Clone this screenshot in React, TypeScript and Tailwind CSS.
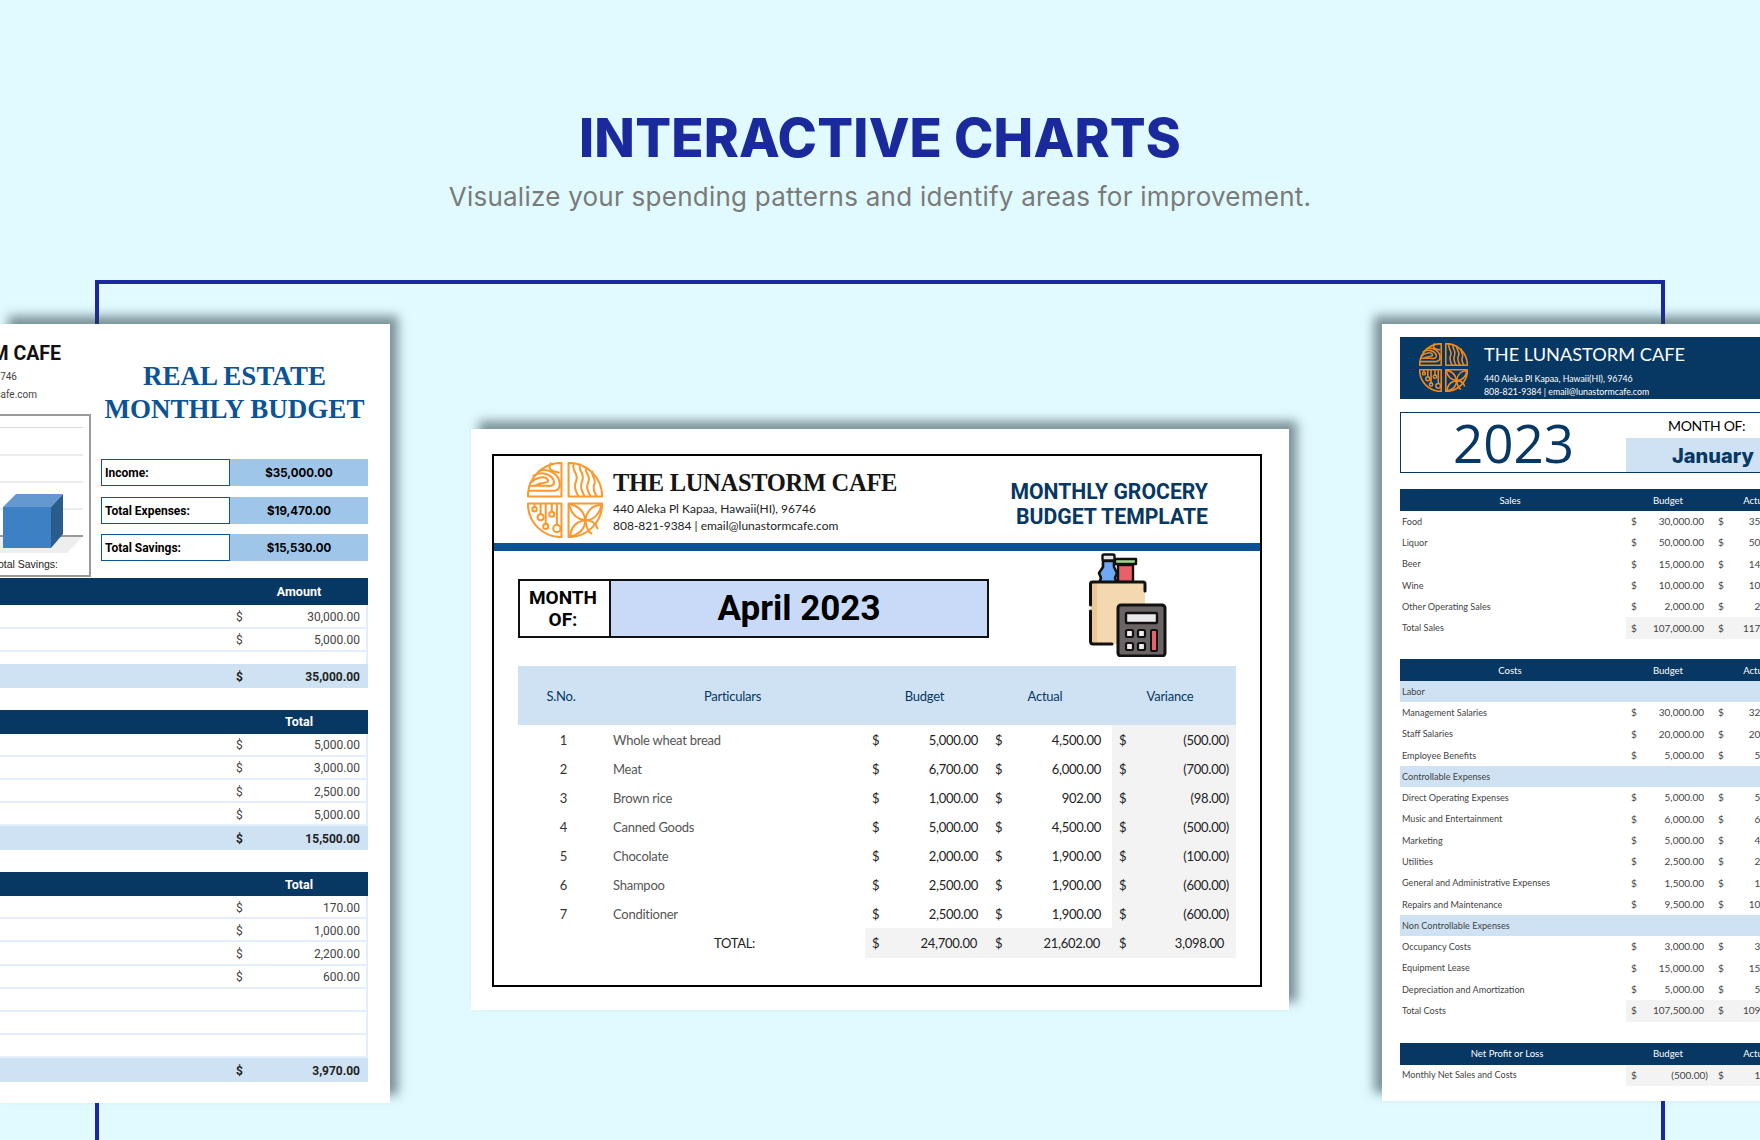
import React from "react";

function Logo({ color, className, sw }: { color: string; className: string; sw: string }) {
  return (
    <svg viewBox="0.6 0.6 74.8 74.8" className={className} fill="none" stroke={color} strokeWidth={sw} strokeLinecap="round" strokeLinejoin="round">
      <path d="M34.5 1.5 L34.5 34.5 L1.5 34.5 C1.5 16 16 1.5 34.5 1.5 Z" />
      <path d="M41.5 1.5 C60 1.5 74.5 16 74.5 34.5 L41.5 34.5 Z" />
      <path d="M1.5 41.5 L34.5 41.5 L34.5 74.5 C16 74.5 1.5 60 1.5 41.5 Z" />
      <path d="M41.5 41.5 L74.5 41.5 C74.5 60 60 74.5 41.5 74.5 Z" />
      <path d="M13 9 C22 7 30 12 32 18 C34 25 32 29 26 29 L3 29" />
      <path d="M7 14 C15 9 25 13 27 19 C28 23 25 25 20 24 L3 24" />
      <path d="M4 21 C10 15 19 14 21 18 C23 22 14 20 8 24" />
      <path d="M24 2 C20 8 26 10 32 11" />
      <path d="M47 2 C43 8 52 12 49 19 C46 25 49 30 51 34" />
      <path d="M53 3 C50 8 58 12 55 19 C52 25 55 30 57 34" />
      <path d="M59 6 C56 10 64 14 61 20 C58 26 61 30 63 34" />
      <path d="M65 10 C63 13 69 17 67 22 C65 27 67 31 69 34" />
      <path d="M8 42 L8 45" /><circle cx="8" cy="47" r="2.2" />
      <path d="M14 42 L14 52" /><circle cx="14" cy="55" r="3" />
      <path d="M19 42 L19 61" /><circle cx="19" cy="64" r="2.5" />
      <path d="M25 42 L25 49" /><circle cx="25" cy="52" r="2.5" />
      <path d="M30 42 L30 62" /><circle cx="30" cy="66" r="3.6" />
      <path d="M42 42 C44 52 50 57 58 58 C57 50 52 44 42 42 Z" />
      <path d="M74 43 C64 43 59 50 58 58 C66 58 72 52 74 43 Z" />
      <path d="M43 74 C44 64 50 59 58 58 C58 66 52 72 43 74 Z" />
      <path d="M70 66 C68 60 64 58 58 58 C59 64 61 70 64 71" />
    </svg>
  );
}

function Grocery({ className }: { className: string }) {
  return (
    <svg viewBox="0 0 78 104" className={className}>
      <path d="M14 8 H25 V14 L28 20 L26 25 L28 30 H10 L12 25 L10 20 L14 14 Z" fill="#6fa8f5" stroke="#111" strokeWidth="2.6" strokeLinejoin="round" />
      <rect x="13.5" y="1.5" width="12" height="6" rx="1.5" fill="#e8e6e8" stroke="#111" strokeWidth="2.4" />
      <rect x="29" y="12" width="15" height="17" fill="#e8606a" stroke="#111" strokeWidth="2.4" />
      <path d="M26 6 H47 V11 H26 Z" fill="#a5d98a" stroke="#111" strokeWidth="2.4" strokeLinejoin="round" />
      <rect x="2" y="29" width="54" height="62" rx="2" fill="#f3d8b0" />
      <rect x="2" y="29" width="6" height="62" fill="#ecc796" />
      <path d="M1.5 52 V31 Q1.5 29 3.5 29 H54 Q56 29 56 31 V38 M1.5 58 V88 Q1.5 91 4 91 H23" fill="none" stroke="#111" strokeWidth="3" strokeLinecap="round" />
      <rect x="29" y="52" width="47" height="51" rx="3" fill="#6b6464" stroke="#111" strokeWidth="3" />
      <rect x="37" y="60" width="31" height="10" rx="1" fill="#e9e7ea" stroke="#111" strokeWidth="2.4" />
      {[[37, 77], [49, 77], [37, 90], [49, 90]].map(([x, y]) => (
        <rect key={`${x}-${y}`} x={x} y={y} width="7" height="7" rx="1.5" fill="#f0eef0" stroke="#111" strokeWidth="2.2" />
      ))}
      <rect x="62" y="77" width="6" height="21" rx="1" fill="#e8606a" stroke="#111" strokeWidth="2" />
    </svg>
  );
}

function LeftSection({ head, rows, total, mt }: { head: string; rows: (string | null)[]; total: string; mt: string }) {
  return (
    <div className={`${mt} w-[368px] font-['Roboto',sans-serif] text-[12px] text-[#444]`}>
      <div className="h-[23.6px] pt-[2px] bg-[#073763] text-white text-[12.5px] font-bold grid grid-cols-[230px_138px] items-center">
        <span />
        <span className="text-center">{head}</span>
      </div>
      {rows.map((r, i) => (
        <div key={i} className="h-[23.2px] pt-[2px] border-b-2 border-r-2 border-[#e3eefa] grid grid-cols-[230px_136px] items-center">
          <span />
          {r && (
            <span className="flex justify-between px-[6px]">
              <span>$</span>
              <span>{r}</span>
            </span>
          )}
        </div>
      ))}
      <div className="h-[24px] pt-[2px] bg-[#cfe2f3] grid grid-cols-[230px_138px] items-center font-bold text-[#222]">
        <span />
        <span className="flex justify-between pl-[6px] pr-[8px]">
          <span>$</span>
          <span>{total}</span>
        </span>
      </div>
    </div>
  );
}

function Summary({ label, value, mt }: { label: string; value: string; mt: string }) {
  return (
    <div className={`${mt} h-[27px] grid grid-cols-[129px_138px] font-['Roboto',sans-serif] text-[12px] font-bold text-black`}>
      <div className="border-[1.5px] border-[#0b5394] bg-white pl-[3px] flex items-center">{label}</div>
      <div className="bg-[#9fc5e8] pt-[2px] flex items-center justify-center font-['Inter',sans-serif] text-[11.5px]">{value}</div>
    </div>
  );
}

const grocery = [
  ["1", "Whole wheat bread", "5,000.00", "4,500.00", "(500.00)"],
  ["2", "Meat", "6,700.00", "6,000.00", "(700.00)"],
  ["3", "Brown rice", "1,000.00", "902.00", "(98.00)"],
  ["4", "Canned Goods", "5,000.00", "4,500.00", "(500.00)"],
  ["5", "Chocolate", "2,000.00", "1,900.00", "(100.00)"],
  ["6", "Shampoo", "2,500.00", "1,900.00", "(600.00)"],
  ["7", "Conditioner", "2,500.00", "1,900.00", "(600.00)"],
];

const groceryCols = "grid grid-cols-[86px_261px_123px_124px_124px]";

function Money({ v, pr, className = "" }: { v: string; pr: string; className?: string }) {
  return (
    <span className={`flex justify-between pl-[7px] pt-[2px] ${pr} ${className}`}>
      <span>$</span>
      <span>{v}</span>
    </span>
  );
}

type RRow = { label: string; kind?: "band" | "total"; b?: string; a?: string };

const sales: RRow[] = [
  { label: "Food", b: "30,000.00", a: "35,000.00" },
  { label: "Liquor", b: "50,000.00", a: "50,000.00" },
  { label: "Beer", b: "15,000.00", a: "14,000.00" },
  { label: "Wine", b: "10,000.00", a: "10,000.00" },
  { label: "Other Operating Sales", b: "2,000.00", a: "2,000.00" },
  { label: "Total Sales", kind: "total", b: "107,000.00", a: "117,000.00" },
];

const costs: RRow[] = [
  { label: "Labor", kind: "band" },
  { label: "Management Salaries", b: "30,000.00", a: "32,000.00" },
  { label: "Staff Salaries", b: "20,000.00", a: "20,000.00" },
  { label: "Employee Benefits", b: "5,000.00", a: "5,000.00" },
  { label: "Controllable Expenses", kind: "band" },
  { label: "Direct Operating Expenses", b: "5,000.00", a: "5,000.00" },
  { label: "Music and Entertainment", b: "6,000.00", a: "6,000.00" },
  { label: "Marketing", b: "5,000.00", a: "4,000.00" },
  { label: "Utilities", b: "2,500.00", a: "2,000.00" },
  { label: "General and Administrative Expenses", b: "1,500.00", a: "1,000.00" },
  { label: "Repairs and Maintenance", b: "9,500.00", a: "10,000.00" },
  { label: "Non Controllable Expenses", kind: "band" },
  { label: "Occupancy Costs", b: "3,000.00", a: "3,000.00" },
  { label: "Equipment Lease", b: "15,000.00", a: "15,000.00" },
  { label: "Depreciation and Amortization", b: "5,000.00", a: "5,000.00" },
  { label: "Total Costs", kind: "total", b: "107,500.00", a: "109,000.00" },
];

const rCols = "grid grid-cols-[226px_87px_87px] items-center";

function RightHead({ a, pr }: { a: string; pr: string }) {
  return (
    <div className={`${rCols} h-[22px] pt-[2px] bg-[#073763] text-white text-[9.5px]`}>
      <span className={`text-center ${pr}`}>{a}</span>
      <span className="text-center pr-[3px]">Budget</span>
      <span className="text-center">Actual</span>
    </div>
  );
}

function RightRow({ r, budgetPr = "pr-[9px]" }: { r: RRow; budgetPr?: string }) {
  if (r.kind === "band") {
    return <div className={`${rCols} h-[21.3px] bg-[#cfe2f3] pl-[2px] text-[9.1px]`}>{r.label}</div>;
  }
  const bg = r.kind === "total" ? "bg-[#f3f3f3]" : "";
  return (
    <div className={`${rCols} h-[21.3px]`}>
      <span className="pl-[2px] text-[9.1px]">{r.label}</span>
      <span className={`flex justify-between pl-[5px] ${budgetPr} h-full items-center ${bg}`}>
        <span>$</span>
        <span>{r.b}</span>
      </span>
      <span className={`flex justify-between pl-[5px] pr-[6px] h-full items-center ${bg}`}>
        <span>$</span>
        <span>{r.a}</span>
      </span>
    </div>
  );
}

export default function App() {
  return (
    <div className="relative w-[1760px] h-[1140px] overflow-hidden bg-[#e0faff]">
      <div className="absolute left-[95px] top-[280px] w-[1570px] h-[860px] border-t-4 border-l-4 border-r-4 border-[#1a2a9c]" />

      <div className="relative text-center pt-[100px] h-[324px]">
        <h1 className="font-['Inter',sans-serif] font-extrabold text-[53px] leading-[76px] text-[#1a2a9c] tracking-[0.2px]">INTERACTIVE CHARTS</h1>
        <p className="mt-[4px] font-['Inter',sans-serif] font-normal text-[26px] leading-[34px] text-[#7a7a7a] tracking-[0.25px]">Visualize your spending patterns and identify areas for improvement.</p>
      </div>

      <div className="relative flex items-start">
        {/* left sheet */}
        <div className="w-[390px] h-[779px] shrink-0 bg-white overflow-hidden shadow-[8px_-8px_10px_rgba(40,60,65,0.55)]">
          <div className="flex h-[254px]">
            <div className="w-[91px] mr-[10px] shrink-0">
              <div className="w-[61px] mt-[18px] h-[24px] flex justify-end whitespace-nowrap font-['Roboto',sans-serif] font-bold text-[19.5px] leading-[24px] text-[#111]">THE LUNASTORM CAFE</div>
              <div className="w-[17px] mt-[2px] h-[18px] flex justify-end whitespace-nowrap font-['Roboto',sans-serif] text-[10px] leading-[18px] text-[#444]">Hawaii(HI), 96746</div>
              <div className="w-[37px] h-[18px] flex justify-end whitespace-nowrap font-['Roboto',sans-serif] text-[10px] leading-[18px] text-[#444]">email@lunastormcafe.com</div>
              <div className="mt-[10px] h-[163px] w-[91px] border-t-2 border-r-2 border-b-2 border-[#9a9a9a] overflow-hidden">
                <svg viewBox="0 0 89 140" className="w-[89px] h-[140px] block">
                  <g stroke="#d9d9d9" strokeWidth="1">
                    <line x1="0" y1="11.5" x2="83" y2="11.5" />
                    <line x1="0" y1="39" x2="83" y2="39" />
                    <line x1="0" y1="66" x2="83" y2="66" />
                    <line x1="0" y1="93" x2="83" y2="93" />
                  </g>
                  <polygon points="0,120 83,120 67,137 0,137" fill="#eeeeee" />
                  <rect x="0" y="119" width="83" height="2" fill="#9a9a9a" />
                  <polygon points="3,91 16,78 63,78 51,91" fill="#6398d0" />
                  <polygon points="51,91 63,78 63,118 51,132" fill="#2a5d8c" />
                  <rect x="3" y="91" width="48" height="41" fill="#3d80c4" />
                </svg>
                <div className="w-[58px] flex justify-end whitespace-nowrap font-['Liberation_Sans',sans-serif] text-[10.5px] leading-[16px] text-[#222]">Total Savings:</div>
              </div>
            </div>
            <div className="w-[267px] shrink-0">
              <div className="mt-[36px] text-center font-['Liberation_Serif',serif] font-bold text-[#0b5394] text-[27px] leading-[33px] whitespace-nowrap">
                <div>REAL ESTATE</div>
                <div>MONTHLY BUDGET</div>
              </div>
              <Summary mt="mt-[33px]" label="Income:" value="$35,000.00" />
              <Summary mt="mt-[11px]" label="Total Expenses:" value="$19,470.00" />
              <Summary mt="mt-[10px]" label="Total Savings:" value="$15,530.00" />
            </div>
          </div>
          <div className="w-[368px] font-['Roboto',sans-serif] text-[12px] text-[#444]">
            <div className="h-[27px] pt-[2px] bg-[#073763] text-white text-[12.5px] font-bold grid grid-cols-[230px_138px] items-center">
              <span />
              <span className="text-center">Amount</span>
            </div>
            {["30,000.00", "5,000.00"].map((v) => (
              <div key={v} className="h-[23.5px] pt-[2px] border-b-2 border-r-2 border-[#e3eefa] grid grid-cols-[230px_136px] items-center">
                <span />
                <span className="flex justify-between px-[6px]">
                  <span>$</span>
                  <span>{v}</span>
                </span>
              </div>
            ))}
            <div className="h-[12px] border-r-2 border-[#e3eefa]" />
            <div className="h-[24px] pt-[2px] bg-[#cfe2f3] grid grid-cols-[230px_138px] items-center font-bold text-[#222]">
              <span />
              <span className="flex justify-between pl-[6px] pr-[8px]">
                <span>$</span>
                <span>35,000.00</span>
              </span>
            </div>
          </div>
          <LeftSection mt="mt-[22px]" head="Total" rows={["5,000.00", "3,000.00", "2,500.00", "5,000.00"]} total="15,500.00" />
          <LeftSection mt="mt-[22px]" head="Total" rows={["170.00", "1,000.00", "2,200.00", "600.00", null, null, null]} total="3,970.00" />
        </div>

        {/* centre sheet */}
        <div className="ml-[81px] mt-[105px] w-[818px] h-[581px] shrink-0 bg-white pt-[25px] pl-[21px] shadow-[8px_-8px_10px_rgba(40,60,65,0.55)]">
          <div className="w-[770px] h-[533px] border-2 border-black">
            <div className="h-[87px] flex">
              <Logo color="#f9992e" sw="2" className="ml-[33px] mt-[6px] w-[76px] h-[76px] shrink-0" />
              <div className="ml-[10px] w-[400px] shrink-0">
                <div className="mt-[11px] font-['Liberation_Serif',serif] font-bold text-[24.5px] tracking-[-0.3px] leading-[32px] text-[#151515] whitespace-nowrap">THE LUNASTORM CAFE</div>
                <div className="mt-[1px] font-['Lato',sans-serif] text-[12px] leading-[17px] text-[#222] whitespace-nowrap">440 Aleka Pl Kapaa, Hawaii(HI), 96746</div>
                <div className="font-['Lato',sans-serif] text-[12px] leading-[17px] text-[#222] whitespace-nowrap">808-821-9384 | email@lunastormcafe.com</div>
              </div>
              <div className="ml-[53px] w-[142px] mt-[23px] text-right font-['Roboto',sans-serif] font-bold text-[21.2px] leading-[25px] text-[#073763] whitespace-nowrap">
                <div className="flex justify-end">MONTHLY GROCERY</div>
                <div className="flex justify-end">BUDGET TEMPLATE</div>
              </div>
            </div>
            <div className="h-[8px] bg-[#0b5394]" />
            <div className="flex items-start">
              <div className="ml-[24px] mt-[28px] w-[471px] h-[59px] border-2 border-[#111] flex shrink-0 font-['Roboto',sans-serif]">
                <div className="w-[91px] pr-[3px] border-r-2 border-[#111] flex items-center justify-center text-center font-bold text-[19px] leading-[22px] text-black">MONTH<br />OF:</div>
                <div className="flex-1 bg-[#c9daf8] pt-[2px] flex items-center justify-center font-bold text-[35px] text-black">April 2023</div>
              </div>
              <Grocery className="ml-[100px] mt-[2px] w-[78px] h-[104px] shrink-0" />
            </div>
            <div className="ml-[24px] mt-[9px] w-[718px] font-['Lato',sans-serif] text-[13px] tracking-[-0.25px] text-[#555]">
              <div className={`${groceryCols} h-[59px] pt-[2px] items-center bg-[#cfe2f3] text-[#073763]`}>
                <span className="text-center">S.No.</span>
                <span className="text-center pr-[4px]">Particulars</span>
                <span className="text-center pr-[4px]">Budget</span>
                <span className="text-center pr-[10px]">Actual</span>
                <span className="text-center pr-[8px]">Variance</span>
              </div>
              {grocery.map((r) => (
                <div key={r[0]} className={`${groceryCols} h-[29px] items-center`}>
                  <span className="text-center pl-[5px] pt-[2px] text-[#333]">{r[0]}</span>
                  <span className="pl-[9px] pt-[2px]">{r[1]}</span>
                  <Money v={r[2]} pr="pr-[10px]" className="text-[#222]" />
                  <Money v={r[3]} pr="pr-[11px]" className="text-[#222]" />
                  <span className="h-full bg-[#f3f3f3] flex items-center">
                    <Money v={r[4]} pr="pr-[7px]" className="w-full text-[#222]" />
                  </span>
                </div>
              ))}
              <div className={`${groceryCols} h-[30px] items-center text-[#222]`}>
                <span />
                <span className="text-center pt-[2px]">TOTAL:</span>
                <span className="h-full bg-[#f3f3f3] flex items-center"><Money v="24,700.00" pr="pr-[11px]" className="w-full" /></span>
                <span className="h-full bg-[#f3f3f3] flex items-center"><Money v="21,602.00" pr="pr-[12px]" className="w-full" /></span>
                <span className="h-full bg-[#f3f3f3] flex items-center"><Money v="3,098.00" pr="pr-[12px]" className="w-full" /></span>
              </div>
            </div>
          </div>
        </div>

        {/* right sheet */}
        <div className="ml-[93px] w-[500px] h-[777px] shrink-0 bg-white pl-[18px] pt-[13px] shadow-[-8px_-8px_10px_rgba(40,60,65,0.55)] font-['Lato',sans-serif] text-[10px] text-[#444]">
          <div className="h-[62px] bg-[#073763] flex text-white">
            <Logo color="#f08a1e" sw="2.4" className="ml-[19px] mt-[6px] w-[49px] h-[49px] shrink-0" />
            <div className="ml-[16px] whitespace-nowrap">
              <div className="mt-[4px] text-[18.2px] leading-[26px]">THE LUNASTORM CAFE</div>
              <div className="mt-[5px] text-[8.8px] leading-[13px]">440 Aleka Pl Kapaa, Hawaii(HI), 96746</div>
              <div className="text-[8.8px] leading-[13px]">808-821-9384 | email@lunastormcafe.com</div>
            </div>
          </div>
          <div className="mt-[13px] h-[61px] border-[1.5px] border-[#073763] border-r-0 grid grid-cols-[225px_1fr]">
            <div className="flex items-center justify-center font-['Open_Sans',sans-serif] text-[53px] leading-none text-[#073763]">2023</div>
            <div className="flex flex-col">
              <div className="h-[25px] pl-[42px] flex items-center font-['Lato',sans-serif] text-[14px] tracking-[-0.3px] text-black">MONTH OF:</div>
              <div className="flex-1 bg-[#cfe2f3] pl-[46px] pt-[2px] flex items-center font-['Inter',sans-serif] font-extrabold text-[20px] text-[#073763]">January</div>
            </div>
          </div>
          <div className="mt-[16px]">
            <RightHead a="Sales" pr="pr-[6px]" />
            {sales.map((r) => <RightRow key={r.label} r={r} />)}
          </div>
          <div className="mt-[20px]">
            <RightHead a="Costs" pr="pr-[6px]" />
            {costs.map((r) => <RightRow key={r.label} r={r} />)}
          </div>
          <div className="mt-[21px]">
            <RightHead a="Net Profit or Loss" pr="pr-[12px]" />
            <RightRow budgetPr="pr-[5px]" r={{ label: "Monthly Net Sales and Costs", kind: "total", b: "(500.00)", a: "1,000.00" }} />
          </div>
        </div>
      </div>
    </div>
  );
}
